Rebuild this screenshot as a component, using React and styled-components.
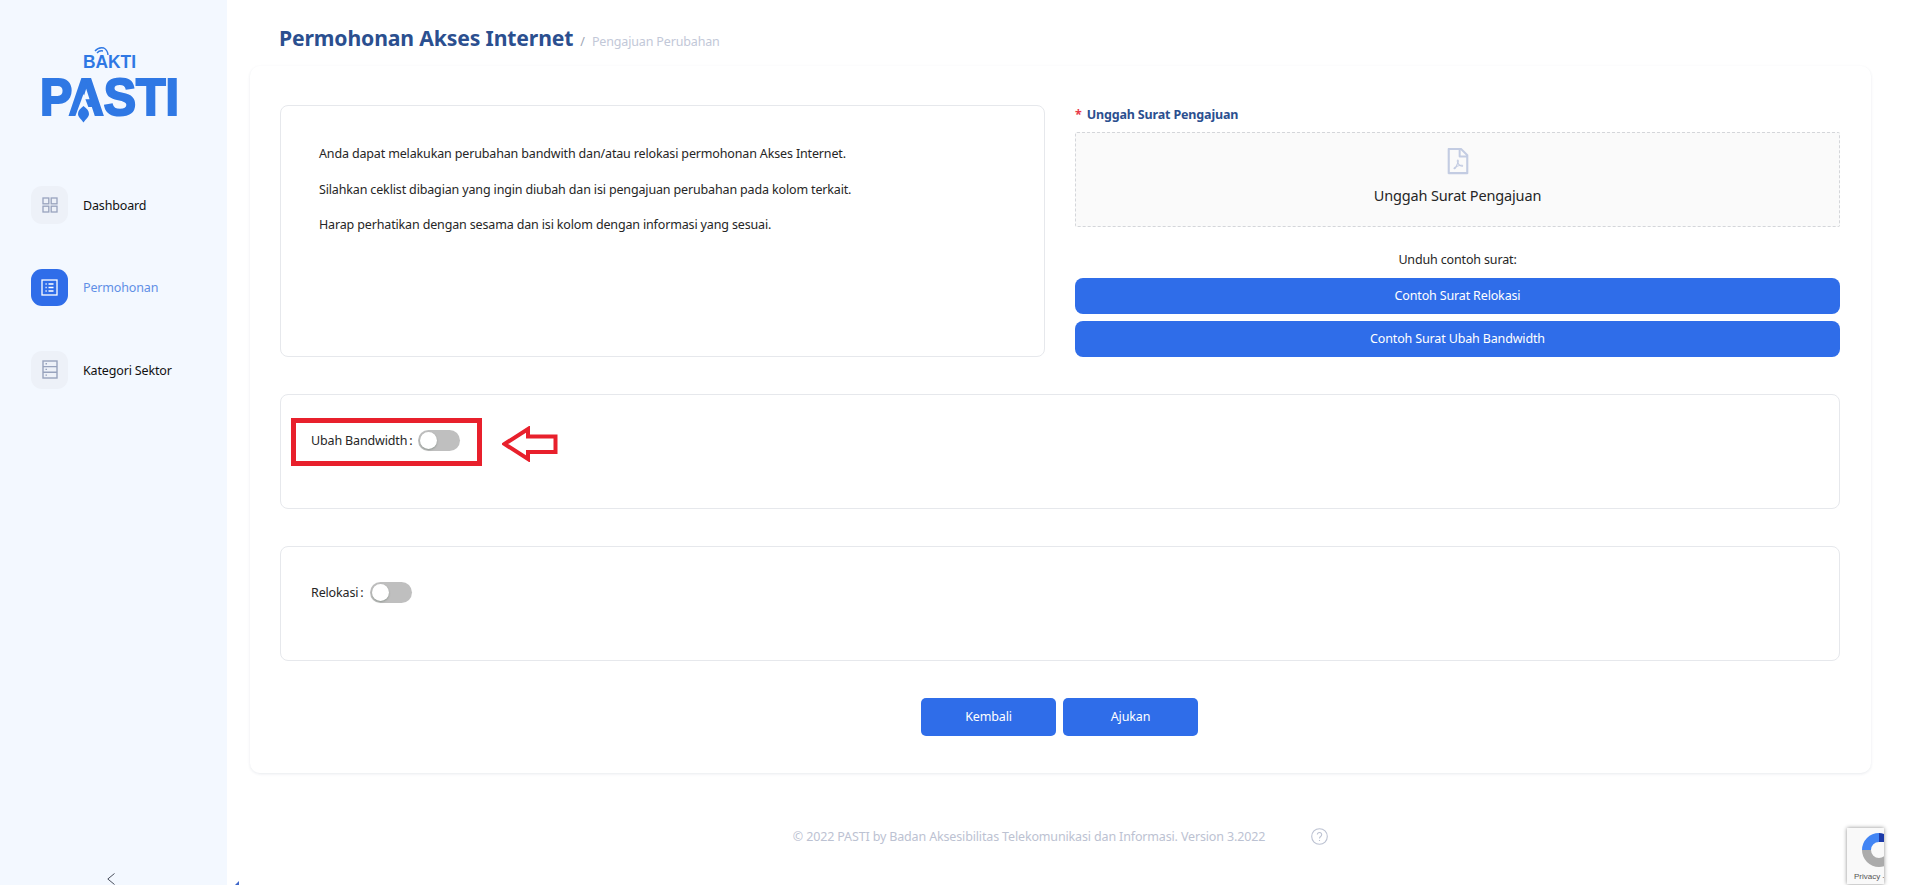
import React from 'react';
import styled, { createGlobalStyle } from 'styled-components';
import { AiOutlineFilePdf } from 'react-icons/ai';

const GlobalStyle = createGlobalStyle`
  html, body {
    margin: 0;
    padding: 0;
    height: 100%;
    overflow: hidden;
    background: #fff;
  }
  * { box-sizing: border-box; }
  body {
    font-family: "Noto Sans", "Open Sans", sans-serif;
    font-size: 12.5px;
    letter-spacing: -0.15px;
    color: #262626;
  }
`;

const Layout = styled.div`
  display: flex;
  width: 1920px;
  height: 885px;
  overflow: hidden;
  position: relative;
`;

const Sidebar = styled.aside`
  width: 227px;
  height: 885px;
  flex: none;
  background: #f3f8ff;
  display: flex;
  flex-direction: column;
  position: relative;
`;

const Logo = styled.svg`
  display: block;
  margin: 44px 0 0 41px;
  width: 138px;
  height: 84px;
  flex: none;
`;

const Nav = styled.nav`
  display: flex;
  flex-direction: column;
  gap: 45px;
  margin-top: 58px;
  padding-left: 31px;
`;

const NavItem = styled.a`
  display: flex;
  align-items: center;
  gap: 15px;
  font-size: 12.5px;
  color: ${p => (p.$active ? '#5f8fe6' : '#111')};
`;

const NavLabel = styled.span`
  position: relative;
  top: ${p => (p.$active ? '0' : '1px')};
`;

const IconTile = styled.span`
  width: 37px;
  height: 37.5px;
  border-radius: 11px;
  display: flex;
  align-items: center;
  justify-content: center;
  background: ${p => (p.$active ? '#2f6de9' : '#edf1f8')};
`;

const Collapse = styled.span`
  margin-top: auto;
  margin-left: 107px;
  height: 12px;
  display: block;
  line-height: 0;
`;

const CornerMark = styled.svg`
  position: absolute;
  left: 235px;
  bottom: 0;
`;

const Main = styled.main`
  flex: 1;
  padding: 0 49px 0 23px;
  display: flex;
  flex-direction: column;
`;

const Header = styled.header`
  height: 66px;
  padding: 23px 0 0 29px;
  display: flex;
  align-items: baseline;
`;

const Title = styled.h1`
  margin: 0;
  font-size: 21.2px;
  line-height: 30px;
  font-weight: 700;
  letter-spacing: -0.15px;
  color: #2b4f8f;
`;

const Crumb = styled.span`
  margin-left: 7px;
  font-size: 12.5px;
  color: #c2c8d8;

  &::before {
    content: '/';
    color: #a0a6b4;
    margin-right: 7px;
  }
`;

const Card = styled.section`
  background: #fff;
  height: 707px;
  border-radius: 10px;
  box-shadow: 0 1px 3px rgba(30, 50, 90, 0.1);
  padding: 39px 31px 0 30px;
  display: flex;
  flex-direction: column;
`;

const TopGrid = styled.div`
  display: grid;
  grid-template-columns: 765px 1fr;
  gap: 30px;
  height: 252px;
`;

const Panel = styled.div`
  border: 1px solid #e6e8ec;
  border-radius: 8px;
  background: #fff;
`;

const InfoPanel = styled(Panel)`
  padding: 38px 38px;
`;

const InfoText = styled.p`
  margin: 0 0 15.5px;
  font-size: 12.5px;
  line-height: 20px;
  color: #262626;
`;

const UploadColumn = styled.div`
  display: flex;
  flex-direction: column;
`;

const FieldLabel = styled.label`
  font-size: 12.5px;
  line-height: 20px;
  height: 27px;
  font-weight: 700;
  color: #2b4f8f;

  &::before {
    content: '*';
    color: #e8394a;
    margin-right: 5px;
  }
`;

const DropZone = styled.div`
  height: 95px;
  border: 1px dashed #d4d6da;
  border-radius: 2px;
  background: #fafafa;
  display: flex;
  flex-direction: column;
  align-items: center;
  padding-top: 13px;
`;

const DropText = styled.span`
  margin-top: 8px;
  font-size: 14.5px;
  line-height: 22px;
  color: #262626;
`;

const SampleCaption = styled.div`
  margin: 23px 0 8px;
  text-align: center;
  font-size: 12.5px;
  line-height: 20px;
  color: #262626;
`;

const SampleButton = styled.button`
  width: 100%;
  height: 36px;
  padding: 0 0 2px;
  border: none;
  border-radius: 8px;
  background: #2f6de9;
  color: #fff;
  font-family: inherit;
  font-size: 12.5px;
  letter-spacing: inherit;
  flex: none;

  & + & {
    margin-top: 7px;
  }
`;

const TogglePanel = styled(Panel)`
  height: 115px;
  margin-top: 37px;
  padding: 35px 30px;
`;

const ToggleRow = styled.div`
  position: relative;
  display: flex;
  align-items: center;
  height: 21px;
  font-size: 12.5px;
  color: #262626;
`;

const ToggleLabel = styled.span`
  &::after {
    content: ':';
    margin: 0 6px 0 2px;
  }
`;

const Switch = styled.span`
  width: 42px;
  height: 21px;
  border-radius: 11px;
  background: #bfbfbf;
  position: relative;
  display: block;

  &::after {
    content: '';
    position: absolute;
    left: 2px;
    top: 2px;
    width: 17px;
    height: 17px;
    border-radius: 50%;
    background: #fff;
    box-shadow: 0 1px 2px rgba(0, 35, 11, 0.25);
  }
`;

const RedFrame = styled.span`
  position: absolute;
  left: -20px;
  top: -12px;
  width: 191px;
  height: 48px;
  border: 5px solid #e8202c;
`;

const RedArrow = styled.svg`
  position: absolute;
  left: 191px;
  top: -4px;
`;

const Actions = styled.div`
  display: flex;
  justify-content: center;
  gap: 7px;
  margin: 37px 1px 0 0;
`;

const ActionButton = styled.button`
  width: 135px;
  height: 38px;
  padding: 0 0 2px;
  border: none;
  border-radius: 5px;
  background: #2f6de9;
  color: #fff;
  font-family: inherit;
  font-size: 12.5px;
  letter-spacing: inherit;
`;

const Footer = styled.footer`
  display: flex;
  justify-content: center;
  align-items: center;
  gap: 46px;
  margin-top: 53px;
  height: 20px;
  font-size: 12.5px;
  color: #bcc2d2;
`;

const Recaptcha = styled.div`
  position: absolute;
  left: 1847px;
  top: 828px;
  width: 37px;
  height: 56px;
  background: #f9f9f9;
  box-shadow: 0 0 4px rgba(0, 0, 0, 0.45);
  overflow: hidden;
`;

const RecaptchaMark = styled.svg`
  position: absolute;
  left: 15px;
  top: 5px;
`;

const RecaptchaText = styled.span`
  position: absolute;
  left: 7px;
  top: 44px;
  font-family: "Liberation Sans", Arial, sans-serif;
  font-size: 8px;
  line-height: 10px;
  letter-spacing: 0;
  white-space: nowrap;
  color: #555;
`;

function BrandLogo() {
  return (
    <Logo viewBox="0 0 138 84">
      <g stroke="#2f78e4" strokeWidth="1.4" fill="none">
        <path d="M54 7a9 9 0 0 1 9 -3" />
        <path d="M56 9a6 6 0 0 1 6 -2" />
        <path d="M63 4a9 9 0 0 1 4 7" />
      </g>
      <text
        x="42"
        y="24"
        fontFamily="'Liberation Sans', Arial, sans-serif"
        fontWeight="700"
        fontSize="18"
        letterSpacing="0"
        fill="#2f78e4"
        textLength="53"
        lengthAdjust="spacingAndGlyphs"
      >
        BAKTI
      </text>
      <text
        x="-1"
        y="71"
        fontFamily="'Liberation Sans', Arial, sans-serif"
        fontWeight="700"
        fontSize="52"
        letterSpacing="0"
        fill="#2f78e4"
        stroke="#2f78e4"
        strokeWidth="2.2"
        textLength="139"
        lengthAdjust="spacingAndGlyphs"
      >
        PASTI
      </text>
      <path d="M34 73L42.5 50L51 73Z" fill="#f3f8ff" />
      <path d="M42.5 62c3.5 2.5 5.5 5 5.5 8 0 3 -3 5 -5.5 8.5 -2.5 -3.5 -5.5 -5.5 -5.5 -8.5 0 -3 2 -5.5 5.5 -8z" fill="#2f78e4" />
    </Logo>
  );
}

function GridIcon() {
  return (
    <svg width="16" height="16" viewBox="0 0 16 16" fill="none" stroke="#98a3bd" strokeWidth="1.3">
      <rect x="1" y="1" width="5.8" height="5.8" />
      <rect x="9.2" y="1" width="5.8" height="5.8" />
      <rect x="1" y="9.2" width="5.8" height="5.8" />
      <rect x="9.2" y="9.2" width="5.8" height="5.8" />
    </svg>
  );
}

function ListIcon() {
  return (
    <svg width="17" height="17" viewBox="0 0 17 17" fill="none" stroke="#fff" strokeWidth="1.3">
      <rect x="1" y="1" width="15" height="15" />
      <path d="M7.5 5h5M7.5 8.5h5M7.5 12h5M4.5 5h1.2M4.5 8.5h1.2M4.5 12h1.2" />
    </svg>
  );
}

function SectorIcon() {
  return (
    <svg width="16" height="19" viewBox="0 0 16 19" fill="none" stroke="#98a3bd" strokeWidth="1.4">
      <rect x="1" y="1" width="14" height="17" />
      <path d="M1 6.6h14M1 12.3h14M3.5 3.8h1.5M3.5 9.4h1.5M3.5 15.1h1.5" />
    </svg>
  );
}

export default function App() {
  return (
    <>
      <GlobalStyle />
      <Layout>
        <Sidebar>
          <BrandLogo />
          <Nav>
            <NavItem>
              <IconTile><GridIcon /></IconTile>
              <NavLabel>Dashboard</NavLabel>
            </NavItem>
            <NavItem $active>
              <IconTile $active><ListIcon /></IconTile>
              <NavLabel $active>Permohonan</NavLabel>
            </NavItem>
            <NavItem>
              <IconTile><SectorIcon /></IconTile>
              <NavLabel>Kategori Sektor</NavLabel>
            </NavItem>
          </Nav>
          <Collapse>
            <svg width="8" height="12" viewBox="0 0 8 12" fill="none" stroke="#4a4f5c" strokeWidth="1">
              <path d="M7.5 0.5L0.8 6l6.7 5.5" />
            </svg>
          </Collapse>
        </Sidebar>
        <CornerMark width="6" height="4" viewBox="0 0 6 4">
          <path d="M0 4L4 0V4Z" fill="#3f67c9" />
        </CornerMark>
        <Main>
          <Header>
            <Title>Permohonan Akses Internet</Title>
            <Crumb>Pengajuan Perubahan</Crumb>
          </Header>
          <Card>
            <TopGrid>
              <InfoPanel>
                <InfoText>Anda dapat melakukan perubahan bandwith dan/atau relokasi permohonan Akses Internet.</InfoText>
                <InfoText>Silahkan ceklist dibagian yang ingin diubah dan isi pengajuan perubahan pada kolom terkait.</InfoText>
                <InfoText>Harap perhatikan dengan sesama dan isi kolom dengan informasi yang sesuai.</InfoText>
              </InfoPanel>
              <UploadColumn>
                <FieldLabel>Unggah Surat Pengajuan</FieldLabel>
                <DropZone>
                  <AiOutlineFilePdf size={30} color="#c3cce2" />
                  <DropText>Unggah Surat Pengajuan</DropText>
                </DropZone>
                <SampleCaption>Unduh contoh surat:</SampleCaption>
                <SampleButton>Contoh Surat Relokasi</SampleButton>
                <SampleButton>Contoh Surat Ubah Bandwidth</SampleButton>
              </UploadColumn>
            </TopGrid>
            <TogglePanel>
              <ToggleRow>
                <ToggleLabel>Ubah Bandwidth</ToggleLabel>
                <Switch />
                <RedFrame />
                <RedArrow width="56" height="36" viewBox="0 0 56 36">
                  <path d="M2.5 18L26 3V10.5H53.5V26H26V33Z" fill="none" stroke="#e8202c" strokeWidth="4" />
                </RedArrow>
              </ToggleRow>
            </TogglePanel>
            <TogglePanel>
              <ToggleRow>
                <ToggleLabel>Relokasi</ToggleLabel>
                <Switch />
              </ToggleRow>
            </TogglePanel>
            <Actions>
              <ActionButton>Kembali</ActionButton>
              <ActionButton>Ajukan</ActionButton>
            </Actions>
          </Card>
          <Footer>
            <span>© 2022 PASTI by Badan Aksesibilitas Telekomunikasi dan Informasi. Version 3.2022</span>
            <svg width="17" height="17" viewBox="0 0 17 17" fill="none" stroke="#bcc2d2" strokeWidth="1.1">
              <circle cx="8.5" cy="8.5" r="7.8" />
              <path d="M6.3 6.6a2.2 2.2 0 1 1 3.4 1.9c-.8.5-1.2 1-1.2 1.9M8.5 12v1" />
            </svg>
          </Footer>
        </Main>
        <Recaptcha>
          <RecaptchaMark width="34" height="34" viewBox="0 0 34 34" fill="none">
            <path d="M17 0A17 17 0 0 0 0 17H9A8 8 0 0 1 17 9Z" fill="#4285f4" />
            <path d="M0 17A17 17 0 0 0 34 17H25A8 8 0 0 1 9 17Z" fill="#ababab" />
            <path d="M17 0A17 17 0 0 1 22 1V9H17Z" fill="#1c3aa9" />
          </RecaptchaMark>
          <RecaptchaText>Privacy -</RecaptchaText>
        </Recaptcha>
      </Layout>
    </>
  );
}
